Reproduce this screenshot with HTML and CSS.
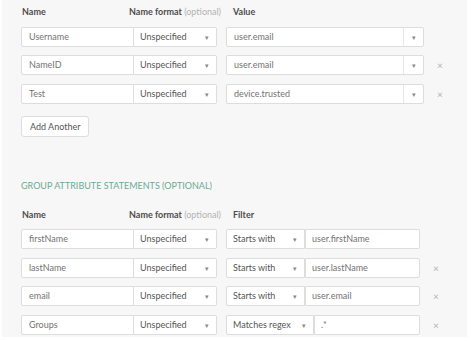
FILE: index.html
```html
<!DOCTYPE html>
<html lang="en">
<head>
    <meta charset="UTF-8">
    <title>Attribute Statements</title>
    <link rel="stylesheet" href="styles.css">
</head>
<body>
    <div class="panel">
        <!-- Attribute statements -->
        <div class="attr-table">
            <div class="head">Name</div>
            <div class="head head-format">Name format <span class="opt">(optional)</span></div>
            <div class="head head-value">Value</div>
            <div></div>

            <div class="field">Username</div>
            <div class="select">Unspecified<span class="caret">&#9662;</span></div>
            <div class="combo"><span class="combo-text">user.email</span><span class="combo-btn">&#9662;</span></div>
            <div></div>

            <div class="field">NameID</div>
            <div class="select">Unspecified<span class="caret">&#9662;</span></div>
            <div class="combo"><span class="combo-text">user.email</span><span class="combo-btn">&#9662;</span></div>
            <div class="remove">&times;</div>

            <div class="field">Test</div>
            <div class="select">Unspecified<span class="caret">&#9662;</span></div>
            <div class="combo"><span class="combo-text">device.trusted</span><span class="combo-btn">&#9662;</span></div>
            <div class="remove">&times;</div>
        </div>

        <button class="add-btn">Add Another</button>

        <div class="section-title">GROUP ATTRIBUTE STATEMENTS (OPTIONAL)</div>

        <!-- Group attribute statements -->
        <div class="group-table">
            <div class="head">Name</div>
            <div class="head head-format">Name format <span class="opt">(optional)</span></div>
            <div class="head head-value">Filter</div>
            <div></div>

            <div class="field">firstName</div>
            <div class="select">Unspecified<span class="caret">&#9662;</span></div>
            <div class="filter"><div class="select filter-type">Starts with<span class="caret">&#9662;</span></div><div class="field filter-val">user.firstName</div></div>
            <div></div>

            <div class="field">lastName</div>
            <div class="select">Unspecified<span class="caret">&#9662;</span></div>
            <div class="filter"><div class="select filter-type">Starts with<span class="caret">&#9662;</span></div><div class="field filter-val">user.lastName</div></div>
            <div class="remove">&times;</div>

            <div class="field">email</div>
            <div class="select">Unspecified<span class="caret">&#9662;</span></div>
            <div class="filter"><div class="select filter-type">Starts with<span class="caret">&#9662;</span></div><div class="field filter-val">user.email</div></div>
            <div class="remove">&times;</div>

            <div class="field">Groups</div>
            <div class="select">Unspecified<span class="caret">&#9662;</span></div>
            <div class="filter"><div class="select filter-type wide">Matches regex<span class="caret">&#9662;</span></div><div class="field filter-val">.*</div></div>
            <div class="remove">&times;</div>
        </div>
    </div>
</body>
</html>
```

FILE: styles.css
```css
body {
    margin: 0;
    background-color: #fff;
    font-family: Lato, "Liberation Sans", Arial, sans-serif;
    font-size: 9px;
    color: #666;
}
.panel {
    margin-left: 2px;
    width: 446px;
    height: 337px;
    padding-left: 19px;
    background-color: #f7f7f7;
    overflow: hidden;
}
.attr-table,
.group-table {
    display: grid;
    grid-template-columns: 113px 83px 207px 32px;
    row-gap: 8.5px;
    align-items: center;
}
.attr-table {
    padding-top: 5px;
}
.group-table {
    grid-template-columns: 113px 83px 203px 32px;
}
.head {
    height: 14px;
    line-height: 14px;
    color: #4d4d4d;
    font-weight: 700;
    white-space: nowrap;
    margin-bottom: -1px;
    padding-left: 1px;
}
.head-format {
    margin-left: -6px;
}
.head-value {
    padding-left: 16px;
}
.opt {
    color: #b3b3b3;
    font-weight: 400;
}
.field,
.select,
.combo {
    height: 20px;
    box-sizing: border-box;
    background-color: #fff;
    border: 1px solid #ddd;
    line-height: 18px;
    padding-left: 7px;
    color: #737373;
    white-space: nowrap;
}
.field {
    border-radius: 2px 0 0 2px;
}
.select {
    display: flex;
    justify-content: space-between;
    border-left: none;
    padding-left: 6px;
    padding-right: 7px;
    border-radius: 0 2px 2px 0;
    color: #555;
}
.caret {
    font-size: 7px;
    color: #888;
}
.combo {
    display: flex;
    margin-left: 9px;
    padding-left: 0;
    border-radius: 2px;
}
.combo-text {
    flex: 1;
    padding-left: 7px;
    border-right: 1px solid #e8e8e8;
}
.combo-btn {
    width: 19px;
    text-align: center;
    font-size: 7px;
    color: #888;
}
.filter {
    display: flex;
    margin-left: 9px;
}
.filter-type {
    width: 79px;
    flex: none;
    border-left: 1px solid #ddd;
    border-radius: 2px 0 0 2px;
}
.filter-type.wide {
    width: 88px;
}
.filter-val {
    flex: 1;
    border-radius: 0 2px 2px 0;
    padding-left: 6px;
}
.remove {
    text-align: center;
    color: #b3b3b3;
    font-size: 10px;
}
.add-btn {
    display: block;
    margin-top: 12px;
    height: 21px;
    padding: 0 8px;
    background-color: #fff;
    border: 1px solid #ddd;
    border-radius: 3px;
    font-family: Lato, "Liberation Sans", Arial, sans-serif;
    font-size: 9px;
    color: #555;
}
.section-title {
    margin-top: 42px;
    margin-bottom: 15px;
    color: #6aaa94;
    font-size: 9px;
    height: 14px;
    line-height: 14px;
}
```
